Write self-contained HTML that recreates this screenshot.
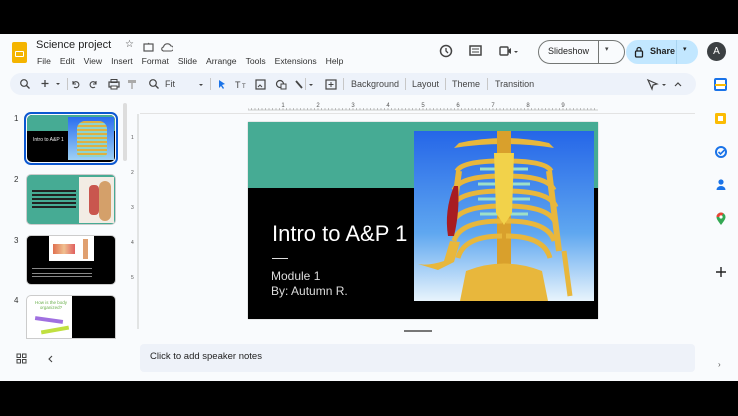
<!DOCTYPE html>
<html><head><meta charset="utf-8"><style>
*{box-sizing:border-box;margin:0;padding:0}
body{width:738px;height:416px;overflow:hidden;background:#000;font-family:"Liberation Sans",sans-serif;position:relative}
.app{position:absolute;left:0;top:34px;width:738px;height:347px;background:#f9fbfd}
.a{position:absolute}
.menu span{margin-right:9px}
.tb{position:absolute;left:10px;top:39px;width:686px;height:22px;background:#edf2fa;border-radius:11px}
.t{position:absolute;font-size:9px;color:#444;top:45px}
.sep{position:absolute;top:44px;width:1px;height:12px;background:#c7c7c7}
.num{position:absolute;left:14px;font-size:8px;color:#333}
.th{position:absolute;left:26px;width:90px;border-radius:5px;overflow:hidden}
</style></head><body>
<div class="app">
 <div class="a" style="left:12px;top:8px;width:15px;height:21px;background:#f4b400;border-radius:2px"></div>
 <div class="a" style="left:15px;top:17px;width:9px;height:6px;border:1.3px solid #fff;border-radius:1px"></div>
 <div class="a" style="left:36px;top:5px;font-size:11px;color:#1f1f1f">Science project</div>
 <div class="a" style="left:125px;top:5px;font-size:10px;color:#444">☆</div>
 <svg class="a" style="left:143px;top:7px" width="30" height="12"><rect x="1" y="3" width="9" height="7" fill="none" stroke="#555" stroke-width="1.2"/><path d="M1 3h4l1 -1" stroke="#555" fill="none"/><path d="M21 10h7a2.5 2.5 0 0 0 0-5a4 4 0 0 0-7.5 1a2 2 0 0 0 .5 4z" fill="none" stroke="#555" stroke-width="1.1"/></svg>
 <div class="a menu" style="left:37px;top:22px;font-size:8.6px;color:#333"><span>File</span><span>Edit</span><span>View</span><span>Insert</span><span>Format</span><span>Slide</span><span>Arrange</span><span>Tools</span><span>Extensions</span><span>Help</span></div>
 <svg class="a" style="left:438px;top:9px" width="80" height="16"><circle cx="8" cy="8" r="5.5" fill="none" stroke="#444" stroke-width="1.5"/><path d="M8 5v3l2 2" stroke="#444" fill="none" stroke-width="1.3"/><rect x="32" y="3" width="11" height="9" fill="none" stroke="#444" stroke-width="1.5"/><path d="M34 6h7M34 9h7" stroke="#444"/><rect x="62" y="4" width="8" height="8" rx="1" fill="none" stroke="#444" stroke-width="1.4"/><path d="M70 7l3-2v6l-3-2" fill="#444"/><path d="M76 8l2 2 2-2z" fill="#444"/></svg>
 <div class="a" style="left:538px;top:6px;width:87px;height:24px;border:1px solid #747775;border-radius:12px"></div>
 <div class="a" style="left:598px;top:7px;width:1px;height:22px;background:#747775"></div>
 <div class="a" style="left:548px;top:12px;font-size:9px;color:#1f1f1f">Slideshow</div>
 <div class="a" style="left:605px;top:11px;font-size:7px;color:#444">▾</div>
 <div class="a" style="left:626px;top:6px;width:72px;height:24px;background:#c2e7ff;border-radius:12px"></div>
 <div class="a" style="left:676px;top:6px;width:1px;height:24px;background:#a8d4f0"></div>
 <svg class="a" style="left:634px;top:12px" width="10" height="12"><rect x="1.5" y="5" width="7" height="6" rx="1" fill="none" stroke="#1f1f1f" stroke-width="1.3"/><path d="M3 5V3.5a2 2 0 0 1 4 0V5" fill="none" stroke="#1f1f1f" stroke-width="1.2"/></svg>
 <div class="a" style="left:650px;top:12px;font-size:9px;font-weight:bold;color:#1f1f1f">Share</div>
 <div class="a" style="left:683px;top:11px;font-size:7px;color:#1f1f1f">▾</div>
 <div class="a" style="left:707px;top:8px;width:19px;height:19px;border-radius:50%;background:#3c4043;color:#fff;font-size:10px;text-align:center;line-height:19px">A</div>
 <div class="tb"></div>
 <svg class="a" style="left:18px;top:44px" width="200" height="14"><circle cx="6" cy="5" r="3.3" fill="none" stroke="#444" stroke-width="1.2"/><path d="M8.5 7.5l3 3" stroke="#444" stroke-width="1.3"/><path d="M27 2v7M23.5 5.5h7" stroke="#444" stroke-width="1.3"/><path d="M38 5l2 2 2-2z" fill="#444"/><path d="M55 6a3 3 0 1 1 1 3M55 3v3h3" fill="none" stroke="#444" stroke-width="1.1"/><path d="M78 6a3 3 0 1 0-1 3M78 3v3h-3" fill="none" stroke="#444" stroke-width="1.1"/><rect x="91" y="4" width="10" height="5" fill="none" stroke="#444" stroke-width="1.2"/><rect x="93" y="1.5" width="6" height="3" fill="none" stroke="#444"/><rect x="93" y="8" width="6" height="3" fill="#fff" stroke="#444"/><rect x="110" y="2" width="8" height="3" fill="#aaa"/><path d="M114 5v6" stroke="#aaa" stroke-width="1.5"/><circle cx="135" cy="5" r="3.3" fill="none" stroke="#444" stroke-width="1.2"/><path d="M137.5 7.5l3 3" stroke="#444" stroke-width="1.3"/><path d="M181 6l2 2 2-2z" fill="#444"/></svg>
 <div class="t" style="left:165px">Fit</div>
 <div class="sep" style="left:67px"></div><div class="sep" style="left:210px"></div>
 <svg class="a" style="left:214px;top:44px" width="130" height="14"><path d="M5 2l6 4-3 1 2 3-1 1-2-3-2 2z" fill="#1a73e8"/><text x="21" y="10" font-size="9" fill="#444" font-family="Liberation Sans">T</text><text x="28" y="10" font-size="6" fill="#444" font-family="Liberation Sans">T</text><rect x="42" y="2" width="9" height="9" fill="none" stroke="#444" stroke-width="1.2"/><path d="M44 9l2-2 2 2" stroke="#444" fill="none"/><circle cx="66" cy="6" r="3.5" fill="none" stroke="#444" stroke-width="1.2"/><rect x="67" y="6" width="5" height="5" fill="#edf2fa" stroke="#444"/><path d="M82 3l6 7" stroke="#444" stroke-width="1.8"/><path d="M95 6l2 2 2-2z" fill="#444"/><rect x="112" y="2" width="10" height="9" fill="none" stroke="#444" stroke-width="1.2"/><path d="M117 4v5M114.5 6.5h5" stroke="#444"/></svg>
 <div class="sep" style="left:305px"></div><div class="sep" style="left:343px"></div>
 <div class="t" style="left:351px">Background</div>
 <div class="sep" style="left:405px"></div>
 <div class="t" style="left:412px">Layout</div>
 <div class="sep" style="left:445px"></div>
 <div class="t" style="left:452px">Theme</div>
 <div class="sep" style="left:487px"></div>
 <div class="t" style="left:495px">Transition</div>
 <svg class="a" style="left:645px;top:44px" width="40" height="14"><path d="M3 2l9 4-4 1-1 4z" fill="none" stroke="#444" stroke-width="1.2"/><path d="M17 6l2 2 2-2z" fill="#444"/><path d="M30 8l3-3 3 3" fill="none" stroke="#444" stroke-width="1.2"/></svg>
 <svg class="a" style="left:712px;top:43px" width="20" height="250"><rect x="3" y="2" width="11" height="11" rx="1" fill="#fff" stroke="#1a73e8" stroke-width="2"/><path d="M3 8h11" stroke="#fbbc04" stroke-width="2"/><rect x="3" y="36" width="11" height="11" rx="1.5" fill="#fbbc04"/><rect x="6" y="39" width="5" height="5" fill="#fff"/><circle cx="9" cy="75" r="5" fill="none" stroke="#1a73e8" stroke-width="2"/><path d="M6.5 75l2 2 4-4" stroke="#1a73e8" fill="none" stroke-width="1.6"/><circle cx="9" cy="105" r="2.6" fill="#1a73e8"/><path d="M4.5 113a4.5 4 0 0 1 9 0z" fill="#1a73e8"/><path d="M9 148c-3-4-4.5-6-4.5-8a4.5 4.5 0 0 1 9 0c0 2-1.5 4-4.5 8z" fill="#34a853"/><path d="M4.5 140a4.5 4.5 0 0 1 7-3.7L9 140z" fill="#ea4335"/><circle cx="9" cy="140" r="1.6" fill="#fff"/><path d="M9 190v10M4 195h10" stroke="#222" stroke-width="1.4"/></svg>
 <div class="a" style="left:718px;top:326px;font-size:8px;color:#555">›</div>
 <div class="a" style="left:123px;top:69px;width:4px;height:58px;background:#ddd;border-radius:2px"></div>
 <div class="num" style="top:80px">1</div>
 <div class="a" style="left:24px;top:78px;width:94px;height:53px;border:2px solid #0b57d0;border-radius:7px"></div>
 <div class="th" style="top:81px;height:47px;background:#000;left:27px;width:88px">
  <div class="a" style="left:0;top:0;width:88px;height:16px;background:#46ab94"></div>
  <div class="a" style="left:41px;top:2px;width:46px;height:43px;background:linear-gradient(#2a6ef0,#9fd1f4);"></div>
  <div class="a" style="left:50px;top:6px;width:30px;height:36px;background:repeating-linear-gradient(#e0b040 0 2px,#8dd4d0 2px 4px);border-radius:8px 8px 4px 4px"></div>
  <div class="a" style="left:6px;top:22px;font-size:5px;color:#eee">Intro to A&amp;P 1</div>
 </div>
 <div class="num" style="top:141px">2</div>
 <div class="th" style="top:140px;height:51px;background:#46ab94;border:1px solid #ccc">
  <div class="a" style="left:52px;top:2px;width:35px;height:46px;background:#f2ece4"></div>
  <div class="a" style="left:62px;top:10px;width:10px;height:30px;background:#c9564e;border-radius:4px"></div>
  <div class="a" style="left:72px;top:6px;width:12px;height:40px;background:#d4a06a;border-radius:6px"></div>
  <div class="a" style="left:5px;top:15px;width:44px;height:2px;background:#222;box-shadow:0 4px #222,0 8px #222,0 12px #222,0 16px #222"></div>
 </div>
 <div class="num" style="top:202px">3</div>
 <div class="th" style="top:201px;height:50px;background:#000;border:1px solid #ccc">
  <div class="a" style="left:22px;top:0;width:45px;height:25px;background:#fff"></div>
  <div class="a" style="left:26px;top:8px;width:22px;height:10px;background:linear-gradient(90deg,#e07050,#f0c090,#e06060)"></div>
  <div class="a" style="left:56px;top:3px;width:5px;height:20px;background:#e0a070"></div>
  <div class="a" style="left:5px;top:32px;width:60px;height:1px;background:#888;box-shadow:0 5px #888,0 8px #888"></div>
 </div>
 <div class="num" style="top:262px">4</div>
 <div class="th" style="top:261px;height:44px;background:#fff;border:1px solid #ccc;border-radius:5px 5px 0 0">
  <div class="a" style="left:45px;top:0;width:45px;height:44px;background:#000"></div>
  <div class="a" style="left:5px;top:4px;font-size:4.5px;color:#6ab04c;width:38px;text-align:center">How is the body organized?</div>
  <div class="a" style="left:8px;top:22px;width:28px;height:4px;background:#a070e0;transform:rotate(8deg)"></div>
  <div class="a" style="left:14px;top:32px;width:28px;height:4px;background:#c0e040;transform:rotate(-10deg)"></div>
 </div>
 <svg class="a" style="left:16px;top:319px" width="45" height="12"><rect x="1" y="1" width="3.5" height="3.5" fill="none" stroke="#444"/><rect x="6.5" y="1" width="3.5" height="3.5" fill="none" stroke="#444"/><rect x="1" y="6.5" width="3.5" height="3.5" fill="none" stroke="#444"/><rect x="6.5" y="6.5" width="3.5" height="3.5" fill="none" stroke="#444"/><path d="M36 3l-3 3 3 3" fill="none" stroke="#444" stroke-width="1.1"/></svg>
 <div class="a" style="left:140px;top:66px;width:555px;height:240px;background:#f9fbfd"></div>
 <div class="a" style="left:140px;top:79px;width:555px;height:1px;background:#e3e3e3"></div>
 <svg class="a" style="left:248px;top:66px" width="350" height="12"><line x1="0" y1="10" x2="350" y2="10" stroke="#ccc"/><g stroke="#999" stroke-width="0.6">
 <path d="M0 10v-2M3.5 10v-2M7 10v-2M10.5 10v-2M14 10v-2M17.5 10v-2M21 10v-2M24.5 10v-2M28 10v-2M31.5 10v-2M35 10v-2M38.5 10v-2M42 10v-2M45.5 10v-2M49 10v-2M52.5 10v-2M56 10v-2M59.5 10v-2M63 10v-2M66.5 10v-2M70 10v-2M73.5 10v-2M77 10v-2M80.5 10v-2M84 10v-2M87.5 10v-2M91 10v-2M94.5 10v-2M98 10v-2M101.5 10v-2M105 10v-2M108.5 10v-2M112 10v-2M115.5 10v-2M119 10v-2M122.5 10v-2M126 10v-2M129.5 10v-2M133 10v-2M136.5 10v-2M140 10v-2M143.5 10v-2M147 10v-2M150.5 10v-2M154 10v-2M157.5 10v-2M161 10v-2M164.5 10v-2M168 10v-2M171.5 10v-2M175 10v-2M178.5 10v-2M182 10v-2M185.5 10v-2M189 10v-2M192.5 10v-2M196 10v-2M199.5 10v-2M203 10v-2M206.5 10v-2M210 10v-2M213.5 10v-2M217 10v-2M220.5 10v-2M224 10v-2M227.5 10v-2M231 10v-2M234.5 10v-2M238 10v-2M241.5 10v-2M245 10v-2M248.5 10v-2M252 10v-2M255.5 10v-2M259 10v-2M262.5 10v-2M266 10v-2M269.5 10v-2M273 10v-2M276.5 10v-2M280 10v-2M283.5 10v-2M287 10v-2M290.5 10v-2M294 10v-2M297.5 10v-2M301 10v-2M304.5 10v-2M308 10v-2M311.5 10v-2M315 10v-2M318.5 10v-2M322 10v-2M325.5 10v-2M329 10v-2M332.5 10v-2M336 10v-2M339.5 10v-2M343 10v-2M346.5 10v-2"/></g>
 <g font-size="6" fill="#555" font-family="Liberation Sans" text-anchor="middle"><text x="35" y="7">1</text><text x="70" y="7">2</text><text x="105" y="7">3</text><text x="140" y="7">4</text><text x="175" y="7">5</text><text x="210" y="7">6</text><text x="245" y="7">7</text><text x="280" y="7">8</text><text x="315" y="7">9</text></g></svg>
 <svg class="a" style="left:128px;top:80px" width="12" height="220"><line x1="10" y1="0" x2="10" y2="215" stroke="#ccc"/><g font-size="5" fill="#555" font-family="Liberation Sans"><text x="3" y="25">1</text><text x="3" y="60">2</text><text x="3" y="95">3</text><text x="3" y="130">4</text><text x="3" y="165">5</text></g></svg>
 <div class="a" style="left:248px;top:88px;width:350px;height:197px;background:#000;box-shadow:0 0 1px #999">
  <div class="a" style="left:0;top:0;width:350px;height:66px;background:#46ab94"></div>
  <svg class="a" style="left:166px;top:9px" width="180" height="170" viewBox="0 0 180 170">
   <defs><linearGradient id="g" x1="0" y1="0" x2="0" y2="1"><stop offset="0" stop-color="#2566e8"/><stop offset="0.6" stop-color="#5fa7f0"/><stop offset="1" stop-color="#e8f4fc"/></linearGradient></defs>
   <rect width="180" height="170" fill="url(#g)"/>
   <path d="M45 12q45-10 90 0l5 5q-50-8-100 0z" fill="#e8b73c"/>
   <rect x="83" y="0" width="14" height="170" fill="#d9a02c"/>
   <g fill="none" stroke-width="5">
    <path d="M88 30q-40 0-45 10M92 30q40 0 45 10" stroke="#e8b73c"/>
    <path d="M88 45q-42 0-48 14M92 45q42 0 48 14" stroke="#e8b73c"/>
    <path d="M88 60q-44 0-50 16M92 60q44 0 50 16" stroke="#e8b73c"/>
    <path d="M88 75q-44 0-50 18M92 75q44 0 50 18" stroke="#e8b73c"/>
    <path d="M88 90q-42 0-48 20M92 90q42 0 48 20" stroke="#e8b73c"/>
    <path d="M88 105q-38 0-44 22M92 105q38 0 44 22" stroke="#e8b73c"/>
    <path d="M88 38h-22M92 38h22M88 53h-24M92 53h24M88 68h-24M92 68h24M88 83h-22M92 83h22" stroke="#9ee0c8" stroke-width="3"/>
   </g>
   <path d="M80 22h20l-2 60-8 12-8-12z" fill="#f2d24a"/>
   <path d="M52 140q38-15 76 0l6 30h-88z" fill="#e8b73c"/>
   <path d="M45 40l-8 60" stroke="#e8b73c" stroke-width="6"/>
   <path d="M135 40l10 80" stroke="#e8b73c" stroke-width="6"/>
   <path d="M150 120l6 45" stroke="#e8b73c" stroke-width="5"/>
   <path d="M40 55q-10 25-6 50l6 0q6-25 4-50z" fill="#a81c22"/>
   <path d="M36 110l-6 20q-15 5-26 3l20 6 16-8 6-20z" fill="#e8b73c"/>
  </svg>
  <div class="a" style="left:24px;top:99px;font-size:22px;color:#fff;white-space:nowrap">Intro to A&amp;P 1</div>
  <div class="a" style="left:24px;top:136px;width:16px;height:1px;background:#ddd"></div>
  <div class="a" style="left:23px;top:147px;font-size:12px;line-height:15px;color:#ddd">Module 1<br>By: Autumn R.</div>
 </div>
 <div class="a" style="left:404px;top:296px;width:28px;height:1.5px;background:#777"></div>
 <div class="a" style="left:140px;top:310px;width:555px;height:28px;background:#eef2f9;border-radius:4px"></div>
 <div class="a" style="left:150px;top:317px;font-size:9.5px;color:#1f1f1f">Click to add speaker notes</div>
</div>
</body></html>
